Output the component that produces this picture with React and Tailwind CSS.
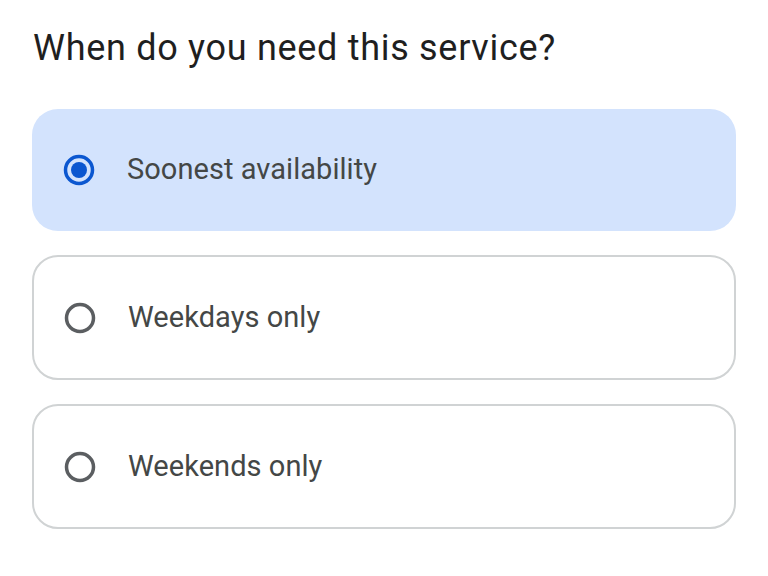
import React from "react";

function Radio({ selected }) {
  if (selected) {
    return (
      <svg width="32" height="32" viewBox="0 0 32 32" className="shrink-0">
        <circle cx="16" cy="16" r="13.5" fill="none" stroke="#0b57d0" strokeWidth="3.5" />
        <circle cx="16" cy="16" r="8" fill="#0b57d0" />
      </svg>
    );
  }
  return (
    <svg width="32" height="32" viewBox="0 0 32 32" className="shrink-0">
      <circle cx="16" cy="16" r="13.5" fill="none" stroke="#5b5e61" strokeWidth="3.5" />
    </svg>
  );
}

function Option({ label, selected }) {
  return (
    <div
      className={
        selected
          ? "flex items-center h-[122px] rounded-[26px] bg-[#d3e3fd] pl-[31px] gap-[32px]"
          : "flex items-center h-[125px] rounded-[26px] bg-white border-2 border-[#d0d3d4] pl-[30px] gap-[32px]"
      }
    >
      <Radio selected={selected} />
      <span className="text-[29px] text-[#444746] tracking-[0.05px]">{label}</span>
    </div>
  );
}

export default function App() {
  return (
    <div
      className="w-[768px] h-[576px] bg-white px-[32px] pt-[26px]"
      style={{ fontFamily: "Roboto, 'Open Sans', sans-serif" }}
    >
      <h1 className="text-[36px] leading-[44px] text-[#1f1f1f] font-normal ml-px tracking-[0.7px]">
        When do you need this service?
      </h1>
      <div className="mt-[39px] flex flex-col gap-[24px]">
        <Option label="Soonest availability" selected />
        <Option label="Weekdays only" />
        <Option label="Weekends only" />
      </div>
    </div>
  );
}
